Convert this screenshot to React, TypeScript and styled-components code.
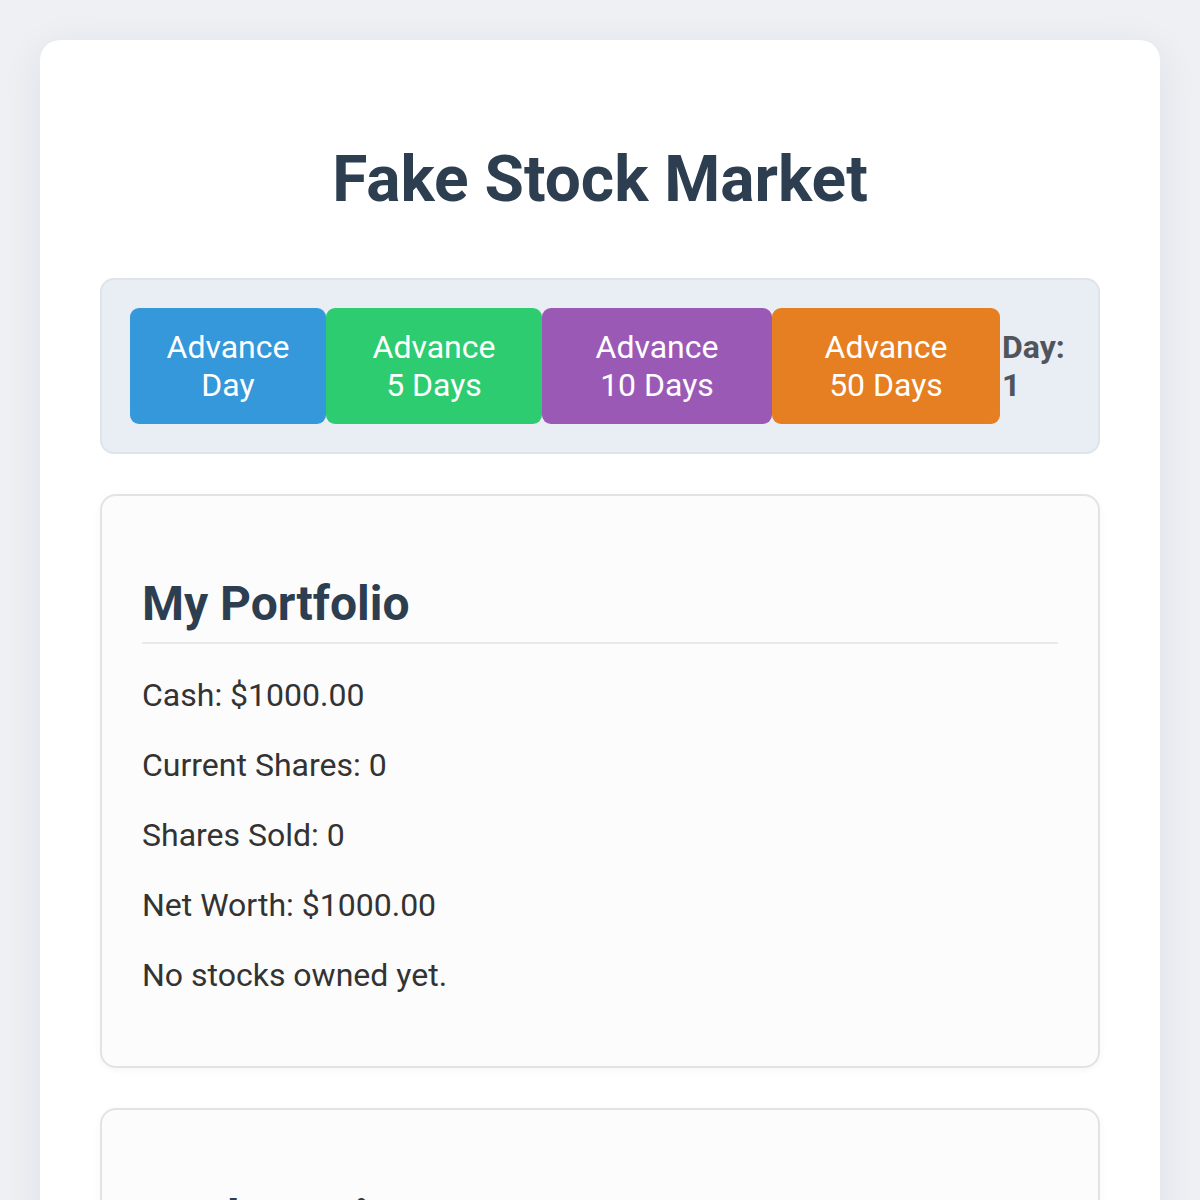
import styled, {createGlobalStyle} from "styled-components";

const GlobalStyle = createGlobalStyle`
    body {
        margin: 0;
        background: #eef0f4;
        font-family: Roboto, "Liberation Sans", sans-serif;
    }
`;

const steps = [
    {label: "Day", color: "#3498db", width: 196},
    {label: "5 Days", color: "#2ecc71", width: 216},
    {label: "10 Days", color: "#9b59b6", width: 230},
    {label: "50 Days", color: "#e67e22", width: 228},
];

export default function App() {
    const day = 1;
    const cash = 1000;

    return (
        <>
            <GlobalStyle/>
            <Page>
                <Title>Fake Stock Market</Title>
                <Controls>
                    {steps.map((s) => (
                        <AdvanceButton key={s.label} $color={s.color} $width={s.width}>
                            <ButtonLine>Advance</ButtonLine>
                            <ButtonLine>{s.label}</ButtonLine>
                        </AdvanceButton>
                    ))}
                    <DayLabel>Day: {day}</DayLabel>
                </Controls>
                <Card>
                    <CardTitle>My Portfolio</CardTitle>
                    <Line>Cash: ${cash.toFixed(2)}</Line>
                    <Line>Current Shares: 0</Line>
                    <Line>Shares Sold: 0</Line>
                    <Line>Net Worth: ${cash.toFixed(2)}</Line>
                    <Line>No stocks owned yet.</Line>
                </Card>
                <Card>
                    <CardTitle>Market Prices</CardTitle>
                    <Line>Loading prices...</Line>
                </Card>
            </Page>
        </>
    );
}

const Page = styled.div`
    margin: 40px;
    padding: 0 60px 60px;
    background: #fff;
    border-radius: 20px;
    box-shadow: 0 8px 40px rgba(30, 40, 60, 0.08);
    display: flex;
    flex-direction: column;
    gap: 40px;
`;

const Title = styled.h1`
    margin: 102px 0 21px;
    text-align: center;
    font-size: 64px;
    font-weight: 700;
    line-height: 75px;
    color: #2c3e50;
`;

const Controls = styled.div`
    display: flex;
    align-items: center;
    padding: 28px;
    background: #e9eef4;
    border: 2px solid #dfe4ea;
    border-radius: 14px;
`;

const AdvanceButton = styled.button<{ $color: string; $width: number }>`
    flex: 0 0 ${(p) => p.$width}px;
    display: flex;
    flex-direction: column;
    align-items: center;
    padding: 20px 16px;
    border: none;
    border-radius: 9px;
    background: ${(p) => p.$color};
    color: #fff;
    font-family: Roboto, "Liberation Sans", sans-serif;
    font-size: 32px;
    line-height: 38px;
    cursor: pointer;
`;

const ButtonLine = styled.span`
    white-space: nowrap;
`;

const DayLabel = styled.span`
    margin-left: 2px;
    font-size: 32px;
    font-weight: 700;
    line-height: 38px;
    color: #50555b;
`;

const Card = styled.section`
    padding: 0 40px 40px;
    background: #fcfcfc;
    border: 2px solid #e3e3e3;
    border-radius: 16px;
    box-shadow: 0 2px 8px rgba(0, 0, 0, 0.04);
`;

const CardTitle = styled.h2`
    margin: 80px 0 0;
    padding-bottom: 10px;
    border-bottom: 2px solid #e8e8e8;
    font-size: 48px;
    font-weight: 700;
    line-height: 56px;
    color: #2c3e50;
`;

const Line = styled.p`
    margin: 32px 0;
    font-size: 32px;
    line-height: 38px;
    color: #333;
`;
